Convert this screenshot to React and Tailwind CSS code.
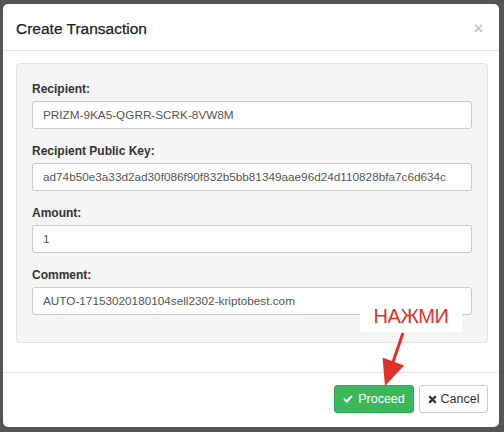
import React from 'react';

const fields = [
  { label: 'Recipient:', value: 'PRIZM-9KA5-QGRR-SCRK-8VW8M' },
  { label: 'Recipient Public Key:', value: 'ad74b50e3a33d2ad30f086f90f832b5bb81349aae96d24d110828bfa7c6d634c' },
  { label: 'Amount:', value: '1' },
  { label: 'Comment:', value: 'AUTO-17153020180104sell2302-kriptobest.com' },
];

const Field = ({ label, value }) => (
  <div className="mb-[12px]">
    <label className="block h-[18px] leading-[20px] mb-[4px] text-[12px] font-bold text-[#333]">{label}</label>
    <div className="h-[28px] px-[10px] flex items-center bg-white border border-[#ccc] rounded-[3px] text-[11.75px] text-[#555] whitespace-nowrap overflow-hidden">
      {value}
    </div>
  </div>
);

export default function App() {
  return (
    <div
      className="relative w-[504px] h-[432px] bg-[#555] pt-[4px] pl-[3px] pr-[5px] pb-[5px] overflow-hidden"
      style={{ fontFamily: '"Liberation Sans", Arial, sans-serif' }}
    >
      <div className="h-full bg-white rounded-[5px] flex flex-col">
        {/* header */}
        <div className="h-[47px] shrink-0 flex items-center justify-between pl-[13px] pr-[16px] pt-[3px] border-b border-[#e5e5e5]">
          <h4 className="text-[15.5px] text-[#222] [-webkit-text-stroke:0.25px_#222]">Create Transaction</h4>
          <span className="text-[16px] font-bold text-[#c8c8c8] leading-none">×</span>
        </div>

        {/* body */}
        <div className="pt-[12px] pl-[13px] pr-[11px] pb-[29px] border-b border-[#e5e5e5]">
          <div className="bg-[#f5f5f5] border border-[#e3e3e3] rounded-[4px] pt-[15px] px-[15px] pb-[15px]">
            {fields.map((f) => (
              <Field key={f.label} label={f.label} value={f.value} />
            ))}
          </div>
        </div>

        {/* footer */}
        <div className="flex justify-end gap-[5px] pt-[12px] pr-[11px]">
          <button className="h-[28px] w-[80px] flex items-center justify-center gap-[5px] bg-[#3cb85c] border border-[#34ab52] rounded-[3px] text-white text-[12.5px]">
            <svg width="10" height="10" viewBox="0 0 24 24" fill="none" stroke="white" strokeWidth="5" strokeLinecap="round" strokeLinejoin="round"><path d="M4 13l5 5L20 6" /></svg>
            Proceed
          </button>
          <button className="h-[28px] w-[69px] flex items-center justify-center gap-[4px] bg-white border border-[#ccc] rounded-[3px] text-[#333] text-[12.5px]">
            <svg width="9" height="9" viewBox="0 0 24 24" fill="none" stroke="#333" strokeWidth="6" strokeLinecap="round"><path d="M5 5l14 14M19 5L5 19" /></svg>
            Cancel
          </button>
        </div>
      </div>

      {/* annotation */}
      <div className="absolute left-[360px] top-[299px] w-[102px] h-[33px] bg-white flex items-center justify-center">
        <span className="text-[20px] text-[#e0302a] leading-none tracking-[-0.5px]">НАЖМИ</span>
      </div>
      <svg className="absolute left-0 top-0" width="504" height="432">
        <line x1="403" y1="333" x2="393" y2="362" stroke="#e0302a" strokeWidth="3" />
        <polygon points="385,386 382.5,357.5 404,365.5" fill="#e0302a" />
      </svg>
    </div>
  );
}
